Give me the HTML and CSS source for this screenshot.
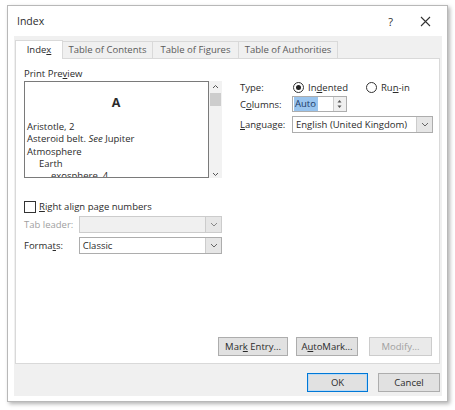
FILE: index.html
```html
<html>

<head>
<meta charset="utf-8">
<link rel="stylesheet" href="styles.css">
</head>

<body>

<div class="window">
  <div class="titlebar">
    <span class="title">Index</span>
    <span class="help">?</span>
    <svg class="close" width="11" height="11" viewBox="0 0 11 11"><path d="M1 1 L10 10 M10 1 L1 10" stroke="#333" stroke-width="1.1"/></svg>
  </div>
  <div class="dialog">
    <div class="tabs">
      <div class="tab active">Inde<u>x</u></div>
      <div class="tab">Table of Contents</div>
      <div class="tab">Table of Figures</div>
      <div class="tab">Table of Authorities</div>
    </div>
    <div class="panel">
      <div class="columns">
        <div class="left">
          <div class="label">Print Pre<u>v</u>iew</div>
          <div class="preview-row">
            <div class="preview">
              <div class="letter">A</div>
              <div class="entry">Aristotle, 2</div>
              <div class="entry">Asteroid belt. <i>See</i> Jupiter</div>
              <div class="entry">Atmosphere</div>
              <div class="entry sub1">Earth</div>
              <div class="entry sub2">exosphere, 4</div>
            </div>
            <div class="scrollbar">
              <svg width="13" height="8" viewBox="0 0 13 8"><path d="M4 5 L6.5 2.5 L9 5" fill="none" stroke="#555" stroke-width="1"/></svg>
              <div class="thumb"></div>
              <div class="track"></div>
              <svg width="13" height="8" viewBox="0 0 13 8"><path d="M4 3 L6.5 5.5 L9 3" fill="none" stroke="#555" stroke-width="1"/></svg>
            </div>
          </div>
          <div class="check-row">
            <span class="checkbox"></span>
            <span><u>R</u>ight align page numbers</span>
          </div>
          <div class="field-row">
            <span class="field-label disabled">Tab leader:</span>
            <div class="select wide disabled-box">
              <span class="value"></span>
              <span class="arrow"><svg width="8" height="5" viewBox="0 0 8 5"><path d="M1 1 L4 4 L7 1" fill="none" stroke="#888" stroke-width="1"/></svg></span>
            </div>
          </div>
          <div class="field-row">
            <span class="field-label">Forma<u>t</u>s:</span>
            <div class="select wide">
              <span class="value">Classic</span>
              <span class="arrow"><svg width="8" height="5" viewBox="0 0 8 5"><path d="M1 1 L4 4 L7 1" fill="none" stroke="#666" stroke-width="1"/></svg></span>
            </div>
          </div>
        </div>
        <div class="right">
          <div class="opt-row type-row">
            <span class="opt-label">Type:</span>
            <span class="radio checked"></span><span class="radio-text">In<u>d</u>ented</span>
            <span class="radio"></span><span class="radio-text">Ru<u>n</u>-in</span>
          </div>
          <div class="opt-row cols-row">
            <span class="opt-label">C<u>o</u>lumns:</span>
            <div class="spin">
              <span class="spin-value"><span class="selected">Auto</span></span>
              <span class="spin-buttons">
                <svg width="11" height="6" viewBox="0 0 11 6"><path d="M3.5 4.5 L5.5 2 L7.5 4.5 Z" fill="#555"/></svg>
                <svg width="11" height="6" viewBox="0 0 11 6"><path d="M3.5 1.5 L5.5 4 L7.5 1.5 Z" fill="#555"/></svg>
              </span>
            </div>
          </div>
          <div class="opt-row lang-row">
            <span class="opt-label"><u>L</u>anguage:</span>
            <div class="select lang">
              <span class="value">English (United Kingdom)</span>
              <span class="arrow"><svg width="8" height="5" viewBox="0 0 8 5"><path d="M1 1 L4 4 L7 1" fill="none" stroke="#666" stroke-width="1"/></svg></span>
            </div>
          </div>
        </div>
      </div>
      <div class="panel-buttons">
        <div class="button mark">Mar<u>k</u> Entry...</div>
        <div class="button automark">A<u>u</u>toMark...</div>
        <div class="button modify disabled">Modify...</div>
      </div>
    </div>
    <div class="footer">
      <div class="button ok">OK</div>
      <div class="button cancel">Cancel</div>
    </div>
  </div>
</div>

</body>

</html>
```

FILE: styles.css
```css
body
{
	margin: 0;
	background-color: #FFFFFF;
	font-family: "Open Sans", "Noto Sans", sans-serif;
	font-size: 9.5px;
	color: #2B2B2B;
}

u
{
	text-decoration: underline;
	text-underline-offset: 1px;
}

.window
{
	box-sizing: border-box;
	margin: 5px 0 0 7px;
	width: 441px;
	height: 397px;
	border: 1px solid #B8B8B8;
	box-shadow: 2px 2px 4px rgba(0, 0, 0, 0.3);
	background-color: #FFFFFF;
}

.titlebar
{
	display: flex;
	align-items: center;
	height: 30px;
	padding: 0 16px 0 9px;
}

.title
{
	font-size: 10.5px;
	flex: 1;
}

.help
{
	font-size: 11px;
	margin-right: 27px;
}

.dialog
{
	margin: 0 5px 0 6px;
	height: 360px;
	background-color: #F0F0F0;
	padding: 4px 1px 0 1px;
	box-sizing: border-box;
}

.tabs
{
	display: flex;
	height: 18px;
	align-items: flex-end;
}

.tab
{
	box-sizing: border-box;
	height: 17px;
	line-height: 15px;
	border: 1px solid #D9D9D9;
	border-bottom: none;
	border-left: none;
	color: #5A5A5A;
	text-align: center;
}

.tab:nth-child(2) { width: 90px; }
.tab:nth-child(3) { width: 86px; }
.tab:nth-child(4) { width: 99px; }

.tab.active
{
	width: 48px;
	height: 19px;
	line-height: 17px;
	margin-bottom: -1px;
	background-color: #FFFFFF;
	border-left: 1px solid #D9D9D9;
	color: #2B2B2B;
	position: relative;
	z-index: 1;
}

.panel
{
	box-sizing: border-box;
	height: 306px;
	width: 425px;
	background-color: #FFFFFF;
	border: 1px solid #D9D9D9;
	padding: 0 7px 7px 8px;
	display: flex;
	flex-direction: column;
}

.columns
{
	display: flex;
}

.left
{
	width: 198px;
}

.right
{
	margin-left: 18px;
	padding-top: 21px;
}

.label
{
	margin-top: 7px;
	height: 15px;
	line-height: 15px;
}

.preview-row
{
	display: flex;
}

.preview
{
	box-sizing: border-box;
	width: 185px;
	height: 97px;
	border: 1px solid #7A7A7A;
	padding: 0 0 0 2px;
	overflow: hidden;
}

.letter
{
	text-align: center;
	font-weight: bold;
	font-size: 12.5px;
	margin-top: 12px;
	height: 19px;
	margin-bottom: 8px;
	padding-right: 3px;
}

.entry
{
	height: 12.3px;
	line-height: 12px;
	white-space: nowrap;
}

.sub1
{
	padding-left: 12px;
}

.sub2
{
	padding-left: 24px;
}

.scrollbar
{
	width: 13px;
	height: 97px;
	display: flex;
	flex-direction: column;
	background-color: #F2F2F2;
}

.scrollbar svg
{
	display: block;
	margin-top: 2px;
}

.thumb
{
	margin: 2px 1px 0 1px;
	height: 13px;
	background-color: #CDCDCD;
}

.track
{
	flex: 1;
}

.check-row
{
	display: flex;
	align-items: center;
	margin-top: 22px;
	height: 13px;
}

.checkbox
{
	box-sizing: border-box;
	width: 12px;
	height: 12px;
	border: 1px solid #333333;
	background-color: #FFFFFF;
	margin-right: 3px;
}

.field-row
{
	display: flex;
	align-items: center;
	margin-top: 4px;
}

.check-row + .field-row
{
	margin-top: 3px;
}

.field-label
{
	width: 55px;
}

.disabled
{
	color: #A0A0A0;
}

.select
{
	box-sizing: border-box;
	display: flex;
	height: 17px;
	border: 1px solid #ADADAD;
	background-color: #FFFFFF;
}

.select.wide
{
	width: 144px;
}

.select.disabled-box
{
	background-color: #F0F0F0;
	border-color: #CCCCCC;
}

.select.lang
{
	width: 141px;
}

.select .value
{
	flex: 1;
	padding-left: 3px;
	line-height: 15px;
}

.select .arrow
{
	width: 15px;
	display: flex;
	align-items: center;
	justify-content: center;
	background-color: #E6E6E6;
	border-left: 1px solid #CCCCCC;
}

.opt-row
{
	display: flex;
	align-items: center;
}

.opt-label
{
	width: 52px;
}

.type-row
{
	height: 14px;
}

.radio
{
	box-sizing: border-box;
	width: 11px;
	height: 11px;
	border: 1px solid #333333;
	border-radius: 50%;
	margin-left: 1px;
	margin-right: 4px;
	position: relative;
}

.radio.checked::after
{
	content: "";
	position: absolute;
	left: 2px;
	top: 2px;
	width: 5px;
	height: 5px;
	border-radius: 50%;
	background-color: #222222;
}

.radio-text
{
	margin-right: 17px;
}

.cols-row
{
	margin-top: 2px;
}

.spin
{
	box-sizing: border-box;
	display: flex;
	width: 55px;
	height: 16px;
	border: 1px solid #ADADAD;
}

.spin-value
{
	flex: 1;
	padding-left: 1px;
	line-height: 14px;
}

.selected
{
	background-color: #99C4EE;
	color: #1B3A66;
	padding: 0 2px 1px 1px;
}

.spin-buttons
{
	width: 12px;
	display: flex;
	flex-direction: column;
	justify-content: center;
	border-left: 1px solid #CCCCCC;
	background-color: #F0F0F0;
}

.spin-buttons svg
{
	display: block;
}

.lang-row
{
	margin-top: 4px;
}

.panel-buttons
{
	margin-top: auto;
	display: flex;
	justify-content: flex-end;
}

.button
{
	box-sizing: border-box;
	height: 19px;
	line-height: 17px;
	text-align: center;
	border: 1px solid #ADADAD;
	background-color: #E1E1E1;
}

.mark { width: 70px; }
.automark { width: 62px; margin-left: 8px; }
.modify { width: 63px; margin-left: 11px; border-color: #CCCCCC; background-color: #EAEAEA; }

.footer
{
	display: flex;
	justify-content: flex-end;
	padding: 9px 1px 0 0;
}

.ok
{
	width: 61px;
	border: 1px solid #0078D7;
	box-shadow: inset 0 0 0 1px #BCDAF3;
}

.cancel
{
	width: 62px;
	margin-left: 10px;
}
```
